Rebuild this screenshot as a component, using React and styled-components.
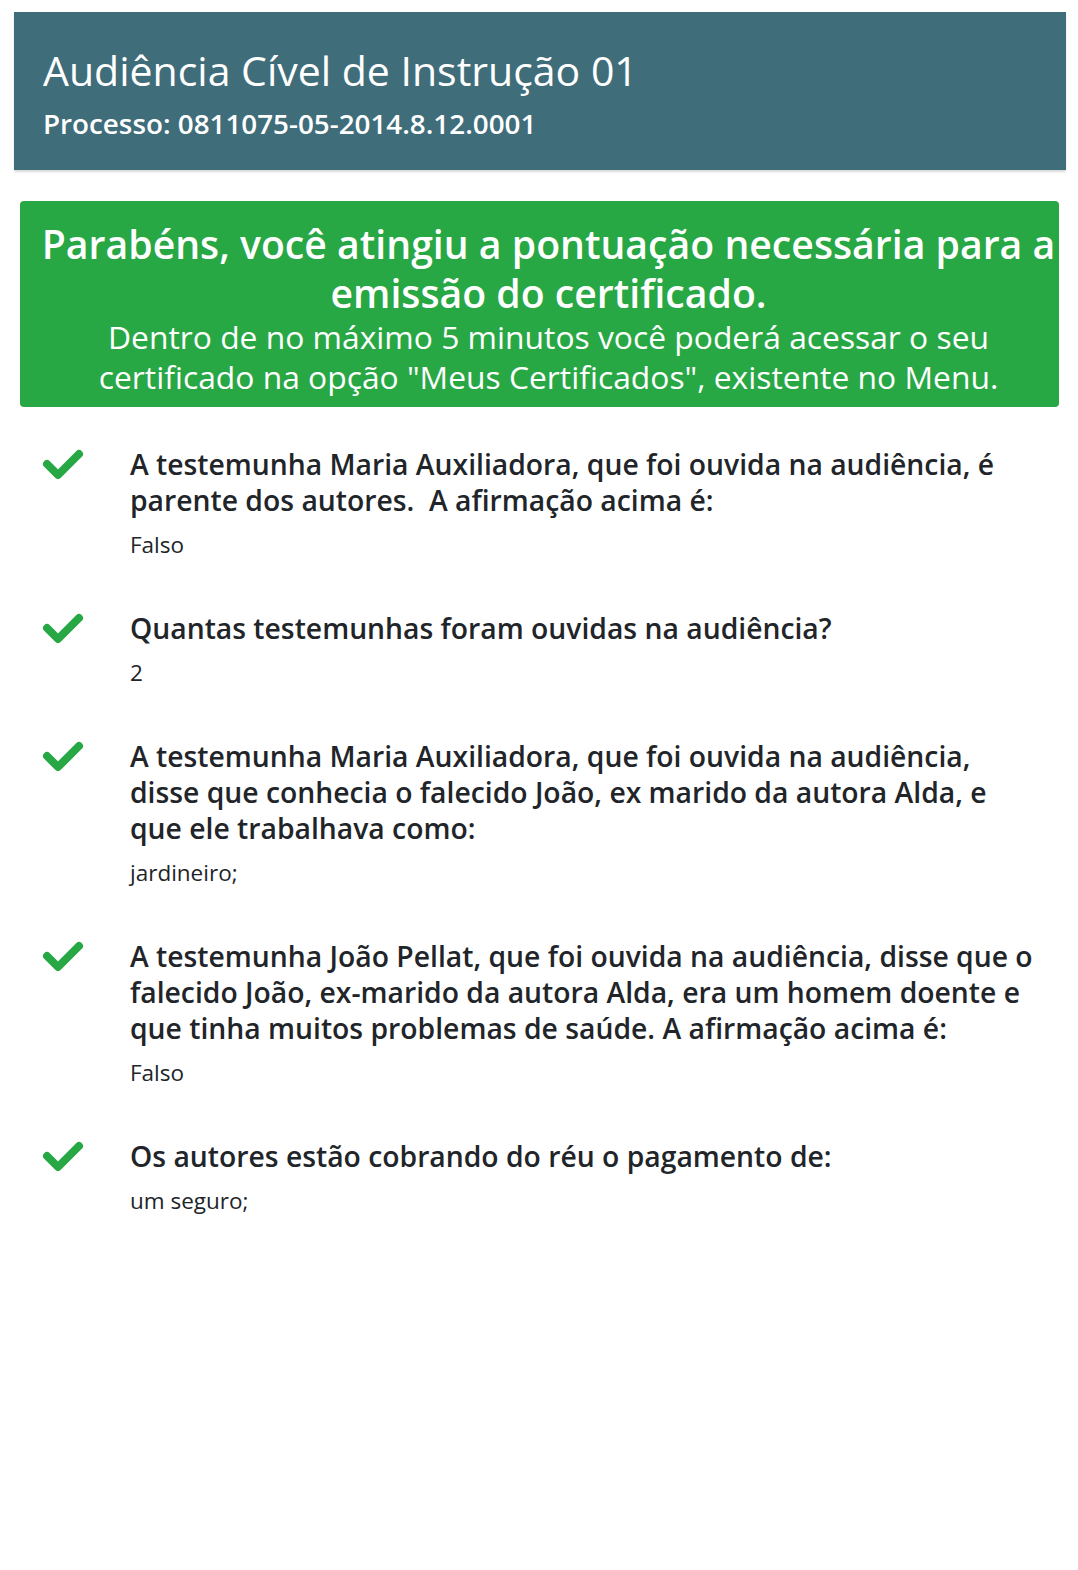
import React from "react";
import styled, { createGlobalStyle } from "styled-components";

const Global = createGlobalStyle`
  html, body { margin: 0; padding: 0; background: #fff; }
  body { font-family: "Open Sans", "Noto Sans", sans-serif; color: #212529; }
  * { box-sizing: border-box; }
`;

const Page = styled.div`
  padding: 12px 12px 40px 14px;
`;

const Header = styled.header`
  background: #3f6d7a;
  color: #fff;
  padding: 34px 29px 30px;
  box-shadow: 0 2px 2px rgba(0, 0, 0, 0.15);
`;

const Title = styled.h1`
  margin: 0;
  font-size: 41px;
  line-height: 48px;
  font-weight: 400;
`;

const Subtitle = styled.h2`
  margin: 12px 0 0;
  font-size: 27.8px;
  line-height: 34px;
  font-weight: 600;
`;

const Alert = styled.div`
  margin: 31px 7px 0 6px;
  background: #28a745;
  color: #fff;
  border-radius: 4px;
  padding: 18px 0 10px 18px;
  text-align: center;
`;

const AlertTitle = styled.div`
  font-size: 39.2px;
  line-height: 49px;
  font-weight: 600;
`;

const AlertText = styled.div`
  padding: 0 40px;
  font-size: 31.8px;
  line-height: 40px;
  font-weight: 400;
`;

const List = styled.div`
  display: flex;
  flex-direction: column;
  gap: 50px;
  margin-top: 39px;
  padding: 0 29px 0 28px;
`;

const Item = styled.div`
  display: flex;
  align-items: flex-start;
  gap: 46px;
`;

const Check = styled.svg`
  flex: none;
  width: 42px;
  height: 32px;
  margin-top: 3px;
`;

const Body = styled.div`
  flex: 1;
  display: flex;
  flex-direction: column;
  gap: 12px;
`;

const Question = styled.div`
  font-size: 28.3px;
  line-height: 36px;
  font-weight: 600;
  color: #212529;
`;

const Answer = styled.div`
  font-size: 22.5px;
  line-height: 30px;
  font-weight: 400;
  color: #212529;
`;

const items = [
  {
    q: "A testemunha Maria Auxiliadora, que foi ouvida na audiência, é parente dos autores.\u00a0 A afirmação acima é:",
    a: "Falso",
  },
  { q: "Quantas testemunhas foram ouvidas na audiência?", a: "2" },
  {
    q: "A testemunha Maria Auxiliadora, que foi ouvida na audiência, disse que conhecia o falecido João, ex marido da autora Alda, e que ele trabalhava como:",
    a: "jardineiro;",
  },
  {
    q: "A testemunha João Pellat, que foi ouvida na audiência, disse que o falecido João, ex-marido da autora Alda, era um homem doente e que tinha muitos problemas de saúde. A afirmação acima é:",
    a: "Falso",
  },
  { q: "Os autores estão cobrando do réu o pagamento de:", a: "um seguro;" },
];

const CheckIcon = () => (
  <Check viewBox="0 0 42 32">
    <polyline
      points="5,15 16,26 37,5"
      fill="none"
      stroke="#28a745"
      strokeWidth="8"
      strokeLinecap="round"
      strokeLinejoin="round"
    />
  </Check>
);

export default function App() {
  return (
    <>
      <Global />
      <Page>
        <Header>
          <Title>Audiência Cível de Instrução 01</Title>
          <Subtitle>Processo: 0811075-05-2014.8.12.0001</Subtitle>
        </Header>
        <Alert>
          <AlertTitle>
            Parabéns, você atingiu a pontuação necessária para a emissão do certificado.
          </AlertTitle>
          <AlertText>
            Dentro de no máximo 5 minutos você poderá acessar o seu certificado na opção "Meus
            Certificados", existente no Menu.
          </AlertText>
        </Alert>
        <List>
          {items.map((it, i) => (
            <Item key={i}>
              <CheckIcon />
              <Body>
                <Question>{it.q}</Question>
                <Answer>{it.a}</Answer>
              </Body>
            </Item>
          ))}
        </List>
      </Page>
    </>
  );
}
